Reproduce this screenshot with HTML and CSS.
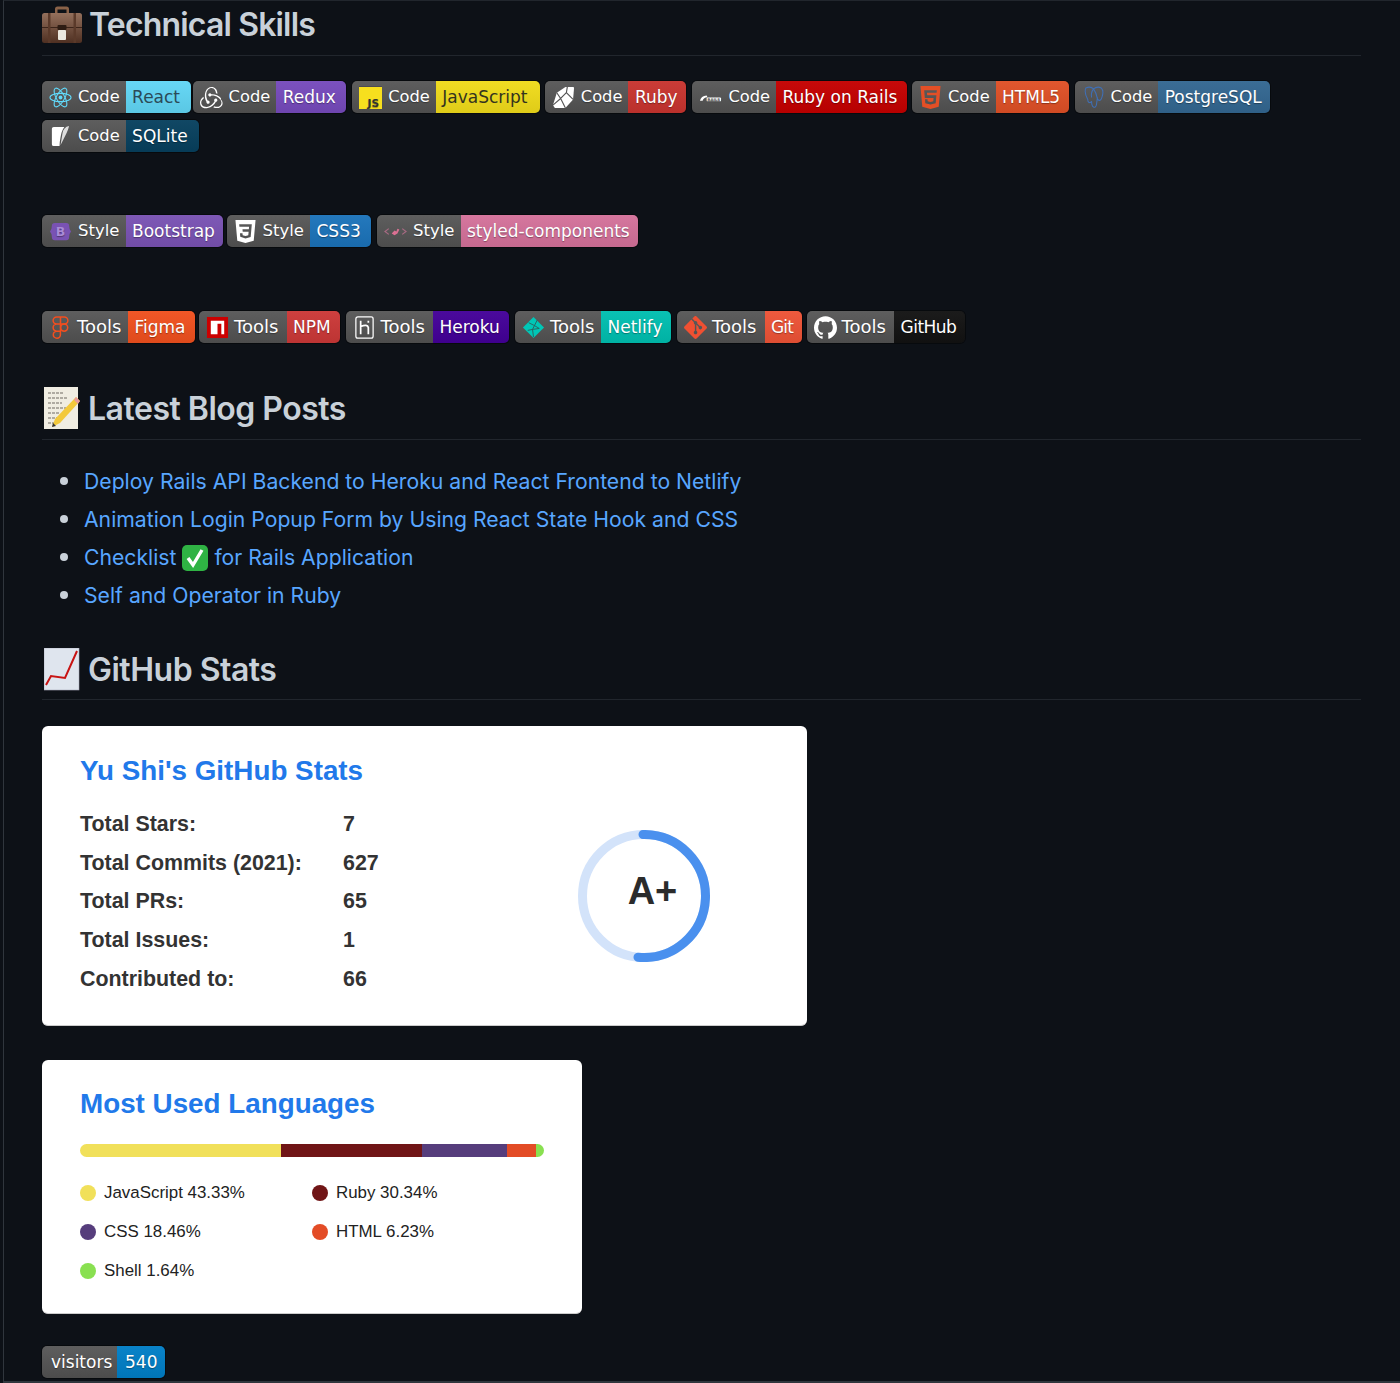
FILE: index.html
```html
<!DOCTYPE html>
<html lang="en">
<head>
  <meta charset="UTF-8">
  <meta name="viewport" content="width=device-width, initial-scale=1.0">
  <title>Technical Skills</title>
  <link rel="stylesheet" href="styles.css">
</head>
<body>
<main class="readme">

  <h2 class="heading first">
    <svg class="emoji" viewBox="0 0 40 37"><defs><linearGradient id="case" x1="0" y1="0" x2="0" y2="1"><stop offset="0" stop-color="#94705c"/><stop offset="1" stop-color="#4f3022"/></linearGradient></defs><path d="M13 8V3q0-2.500 2.500-2.500h9Q27 .5 27 3v5h-2.500V3.500h-9V8z" fill="#8a6248"/><rect x="0" y="7" width="40" height="30" rx="2.500" fill="url(#case)"/><rect x="0" y="21" width="40" height="1" fill="#3c2419"/><rect x="6" y="7" width="2.500" height="30" fill="#5b3a2a"/><rect x="31.500" y="7" width="2.500" height="30" fill="#5b3a2a"/><rect x="15.500" y="19" width="9" height="5" rx="1" fill="#2e1c13"/><rect x="16" y="24" width="8" height="10" rx="1" fill="#ece8df"/></svg>
    Technical Skills
  </h2>

  <div class="badges row-code">
    <span class="badge"><span class="label w-code"><svg class="icon" viewBox="-12 -12 24 24" fill="none" stroke="#61dafb" stroke-width="1.100"><ellipse rx="11" ry="4.300"/><ellipse rx="11" ry="4.300" transform="rotate(60)"/><ellipse rx="11" ry="4.300" transform="rotate(120)"/><circle r="2" fill="#61dafb" stroke="none"/></svg>Code</span><span class="value react">React</span></span>
    <span class="badge tight"><span class="label w-code"><svg class="icon" viewBox="0 0 24 24" fill="#fff"><path d="M16.634 16.504c.87-.075 1.543-.84 1.5-1.754-.047-.914-.796-1.648-1.709-1.648h-.061a1.71 1.71 0 00-1.648 1.769c.03.479.226.869.494 1.153-1.048 2.038-2.621 3.536-5.005 4.795-1.603.838-3.296 1.154-4.944.93-1.378-.195-2.456-.81-3.116-1.799-.988-1.499-1.078-3.116-.24-4.734.6-1.17 1.499-2.023 2.099-2.443a9.96 9.96 0 01-.42-1.543C-.868 14.408-.416 18.752.932 20.805c1.004 1.498 3.057 2.456 5.304 2.456.6 0 1.23-.044 1.843-.194 3.897-.749 6.848-3.086 8.541-6.532zm5.348-3.746c-2.32-2.728-5.738-4.226-9.634-4.226h-.51c-.253-.554-.837-.899-1.498-.899h-.045c-.943 0-1.678.81-1.647 1.753.03.898.794 1.648 1.708 1.648h.06a1.69 1.69 0 001.499-1.049h.54c2.276 0 4.44.66 6.399 1.963 1.498 1.004 2.591 2.303 3.177 3.836.48 1.243.465 2.456-.06 3.505-.81 1.573-2.18 2.411-3.987 2.411-1.15 0-2.276-.36-2.876-.66-.33.3-.93.78-1.334 1.064 1.243.585 2.532.93 3.746.93 2.766 0 4.8-1.543 5.589-3.057.78-1.558.72-4.255-1.527-6.219zM6.661 17.003c.03.899.794 1.648 1.708 1.648h.06a1.688 1.688 0 001.648-1.768c0-.9-.779-1.648-1.693-1.648h-.06c-.06 0-.15 0-.226.03-1.243-2.07-1.768-4.316-1.572-6.744.12-1.828.72-3.417 1.797-4.73.9-1.124 2.592-1.664 3.746-1.693 3.206-.06 4.56 3.94 4.65 5.558.394.09 1.06.3 1.498.45C18.131 3.25 15.214 1 12.21 1 9.4 1 6.78 3.04 5.748 6.04c-1.437 3.995-.51 7.832 1.23 10.858-.15.195-.24.51-.318.81z"/></svg>Code</span><span class="value redux">Redux</span></span>
    <span class="badge wide"><span class="label w-code"><svg class="icon" viewBox="0 0 24 24"><rect width="24" height="24" fill="#f7df1e"/><rect width="24" height="1" fill="#445"/><text x="21" y="21.500" text-anchor="end" class="js-mark">JS</text></svg>Code</span><span class="value js">JavaScript</span></span>
    <span class="badge"><span class="label w-code"><svg class="icon" viewBox="0 0 24 24"><path d="M5 7l9-6h8q1 0 1 1l-1 12-8 9H3l-2-3z" fill="#fff"/><path d="M15 7l7 7M15 7l-6 6 5 10M15 7l1-6M9 13L1 20M5 7l4 6" fill="none" stroke="#555" stroke-width="1.200"/></svg>Code</span><span class="value ruby">Ruby</span></span>
    <span class="badge wide"><span class="label w-code"><svg class="icon" viewBox="0 0 24 24"><path d="M1 15.500q1-5 7-5.500l.8 1.800q-4 .2-5 3.700z" fill="#fff"/><rect x="8" y="12" width="15" height="4" rx="1" fill="#fff"/><text x="15.500" y="15.300" text-anchor="middle" class="rails-mark">RAILS</text></svg>Code</span><span class="value rails">Ruby on Rails</span></span>
    <span class="badge"><span class="label w-code"><svg class="icon" viewBox="0 0 24 24" fill="#e34f26"><path d="M1.500 0h21l-1.910 21.563L11.977 24l-8.564-2.438L1.500 0zm7.031 9.750l-.232-2.718 10.059.003.23-2.622L5.412 4.410l.698 8.010h9.126l-.326 3.426-2.910.804-2.955-.810-.188-2.110H6.248l.33 4.171L12 19.351l5.379-1.443.744-8.157H8.531z"/></svg>Code</span><span class="value html">HTML5</span></span>
    <span class="badge wide"><span class="label w-code"><svg class="icon" viewBox="0 0 24 24" fill="none" stroke="#3f6fb5" stroke-width="1.100"><path d="M4 2q5-2 8 1 4-3 8-1 3 3 1 9-1 4-3 4-1 0-2-2l-1 7q-1 3-3 2-2-1-2-6-1 2-3 1-1-1-1-3-4-7-2-12z"/><path d="M12 3q-3 4-2 9M16 13q-1-6-4-10"/></svg>Code</span><span class="value pg">PostgreSQL</span></span>
    <span class="badge"><span class="label w-code"><svg class="icon" viewBox="0 0 24 24" fill="#fff"><path d="M5 2h11q-3 4-4 11-1 5-1 9H5q-2 0-2-2V4q0-2 2-2z"/><path d="M21 1q-6 1-7 8-1 6-2 12 4-8 6-12 2-4 3-8z" fill="#ddd"/></svg>Code</span><span class="value sqlite">SQLite</span></span>
  </div>

  <div class="badges row-style">
    <span class="badge"><span class="label w-style"><svg class="icon" viewBox="0 0 24 24"><path d="M6 3h12q3 0 3 3 0 4 2 6-2 2-2 6 0 3-3 3H6q-3 0-3-3 0-4-2-6 2-2 2-6 0-3 3-3z" fill="#7952b3"/><text x="12" y="17" text-anchor="middle" class="b-mark">B</text></svg>Style</span><span class="value bootstrap">Bootstrap</span></span>
    <span class="badge snug"><span class="label w-style"><svg class="icon" viewBox="0 0 24 24" fill="#fff"><path d="M1.500 0h21l-1.910 21.563L11.977 24l-8.565-2.438L1.500 0zm17.090 4.413L5.410 4.410l.213 2.622 10.125.002-.255 2.716h-6.640l.24 2.573h6.182l-.366 3.523-2.910.804-2.956-.810-.188-2.110h-2.610l.29 3.855L12 19.288l5.373-1.530L18.590 4.414z"/></svg>Style</span><span class="value css">CSS3</span></span>
    <span class="badge wide"><span class="label w-style"><svg class="icon" viewBox="0 0 24 24"><path d="M5 9l-4 3 4 3M19 9l4 3-4 3" fill="none" stroke="#a86a83" stroke-width="1.300"/><path d="M8 14l3-3 2 1 1-3 2 1-2 4-3 2z" fill="#db7093"/></svg>Style</span><span class="value styled">styled-components</span></span>
  </div>

  <div class="badges row-tools">
    <span class="badge"><span class="label w-tools short"><svg class="icon" viewBox="0 0 24 24" fill="none" stroke="#f24e1e" stroke-width="1.600"><path d="M12 1H8a3.700 3.700 0 000 7.400h4zM12 1h4a3.700 3.700 0 010 7.400h-4zM12 8.400H8a3.700 3.700 0 000 7.400h4zM8 15.800a3.700 3.700 0 103.900 3.600v-3.600z"/><circle cx="15.800" cy="12.100" r="3.700"/></svg>Tools</span><span class="value figma">Figma</span></span>
    <span class="badge snug"><span class="label w-tools"><svg class="icon" viewBox="0 0 24 24"><rect x="1" y="1" width="22" height="22" fill="#cb0000"/><path d="M5 5h14v14h-3V8h-4v11H5z" fill="#fff"/></svg>Tools</span><span class="value npm">NPM</span></span>
    <span class="badge wide"><span class="label w-tools"><svg class="icon" viewBox="0 0 24 24" fill="none" stroke="#fff" stroke-width="1.300"><rect x="3" y="1" width="18" height="22" rx="2"/><path d="M8 5v14M8 11q7-3 8 1v7M16 5v2" stroke-width="1.800"/></svg>Tools</span><span class="value heroku">Heroku</span></span>
    <span class="badge wide"><span class="label w-tools short"><svg class="icon" viewBox="0 0 24 24"><path d="M12 1l11 11-11 11L1 12z" fill="#00c7b7"/><path d="M7 7l6 3 5 3-7 1-5 1M13 10l-2 4 1 8M13 10l3-6" fill="none" stroke="#2c5b59" stroke-width=".9"/></svg>Tools</span><span class="value netlify">Netlify</span></span>
    <span class="badge wide"><span class="label w-tools"><svg class="icon" viewBox="0 0 24 24" fill="#f05032"><path d="M23.546 10.930L13.067.452c-.604-.603-1.582-.603-2.188 0L8.708 2.627l2.760 2.760c.645-.215 1.379-.070 1.889.441.516.515.658 1.258.438 1.900l2.658 2.660c.645-.223 1.387-.078 1.900.435.721.720.721 1.884 0 2.604-.719.719-1.881.719-2.600 0-.539-.541-.674-1.337-.404-1.996L12.860 8.955v6.525c.176.086.342.203.488.348.713.721.713 1.883 0 2.600-.719.721-1.889.721-2.609 0-.719-.719-.719-1.879 0-2.598.182-.180.387-.316.605-.406V8.835c-.217-.091-.424-.222-.6-.401-.545-.545-.676-1.342-.396-2.009L7.636 3.700.450 10.881c-.6.605-.6 1.584 0 2.189l10.480 10.477c.604.604 1.582.604 2.186 0l10.430-10.430c.605-.603.605-1.582 0-2.187"/></svg>Tools</span><span class="value git">Git</span></span>
    <span class="badge"><span class="label w-tools"><svg class="icon" viewBox="0 0 24 24" fill="#fff"><path d="M12 .297c-6.630 0-12 5.373-12 12 0 5.303 3.438 9.800 8.205 11.385.6.113.82-.258.82-.577 0-.285-.010-1.040-.015-2.040-3.338.724-4.042-1.610-4.042-1.610C4.422 18.070 3.633 17.700 3.633 17.700c-1.087-.744.084-.729.084-.729 1.205.084 1.838 1.236 1.838 1.236 1.070 1.835 2.809 1.305 3.495.998.108-.776.417-1.305.76-1.605-2.665-.3-5.466-1.332-5.466-5.930 0-1.310.465-2.380 1.235-3.220-.135-.303-.54-1.523.105-3.176 0 0 1.005-.322 3.300 1.230.96-.267 1.980-.399 3-.405 1.020.006 2.040.138 3 .405 2.280-1.552 3.285-1.230 3.285-1.230.645 1.653.24 2.873.12 3.176.765.840 1.230 1.910 1.230 3.220 0 4.610-2.805 5.625-5.475 5.920.42.36.81 1.096.81 2.220 0 1.605-.015 2.896-.015 3.286 0 .315.21.69.825.57C20.565 22.092 24 17.592 24 12.297c0-6.627-5.373-12-12-12"/></svg>Tools</span><span class="value github">GitHub</span></span>
  </div>

  <h2 class="heading blog">
    <svg class="emoji" viewBox="0 0 36 43"><rect x="0" y="0" width="34" height="42" fill="#f0ede2"/><path d="M4 6h16M4 11h20M4 16h14M4 21h18M4 26h12M4 31h10M4 36h8" stroke="#6f6b62" stroke-width="1.200" stroke-dasharray="3 1"/><path d="M32 10l4 4-20 22-8 4 3-8z" fill="#f3c93b"/><path d="M32 10l4 4-2 3-4-4z" fill="#e89a9a"/><path d="M8 40l1-4 3 3z" fill="#333"/></svg>
    Latest Blog Posts
  </h2>

  <ul class="posts">
    <li><a href="#">Deploy Rails API Backend to Heroku and React Frontend to Netlify</a></li>
    <li><a href="#">Animation Login Popup Form by Using React State Hook and CSS</a></li>
    <li><a href="#">Checklist <svg class="check" viewBox="0 0 26 26"><rect width="26" height="26" rx="5" fill="#2fb344"/><path d="M6 13l5 7 9-15" fill="none" stroke="#fff" stroke-width="3.400"/></svg> for Rails Application</a></li>
    <li><a href="#">Self and Operator in Ruby</a></li>
  </ul>

  <h2 class="heading stats">
    <svg class="emoji" viewBox="0 0 36 43"><rect x="0" y="0" width="35" height="42" fill="#dfe5ee"/><rect x="0" y="0" width="35" height="42" fill="none" stroke="#aab" stroke-width=".6"/><path d="M2 37l5-9 14 2 12-27" fill="none" stroke="#c81414" stroke-width="2"/></svg>
    GitHub Stats
  </h2>

  <section class="card card-stats">
    <div class="stats-body">
      <h3 class="card-title">Yu Shi's GitHub Stats</h3>
      <dl class="stat-list">
        <dt>Total Stars:</dt><dd>7</dd>
        <dt>Total Commits (2021):</dt><dd>627</dd>
        <dt>Total PRs:</dt><dd>65</dd>
        <dt>Total Issues:</dt><dd>1</dd>
        <dt>Contributed to:</dt><dd>66</dd>
      </dl>
    </div>
    <svg class="rank" viewBox="0 0 132 132">
      <circle cx="66" cy="66" r="61.500" fill="none" stroke="#d3e3fa" stroke-width="9"/>
      <path d="M65 4.500A61.500 61.500 0 1 1 60 127.200" fill="none" stroke="#4a90ee" stroke-width="9" stroke-linecap="round"/>
      <text x="74.500" y="73.500" text-anchor="middle" class="rank-text">A+</text>
    </svg>
  </section>

  <section class="card card-langs">
    <h3 class="card-title">Most Used Languages</h3>
    <div class="lang-bar">
      <span class="seg c-js" style="width:43.33%"></span>
      <span class="seg c-ruby" style="width:30.34%"></span>
      <span class="seg c-css" style="width:18.46%"></span>
      <span class="seg c-html" style="width:6.23%"></span>
      <span class="seg c-shell" style="width:1.64%"></span>
    </div>
    <ul class="lang-list">
      <li><i class="dot c-js"></i>JavaScript 43.33%</li>
      <li><i class="dot c-ruby"></i>Ruby 30.34%</li>
      <li><i class="dot c-css"></i>CSS 18.46%</li>
      <li><i class="dot c-html"></i>HTML 6.23%</li>
      <li><i class="dot c-shell"></i>Shell 1.64%</li>
    </ul>
  </section>

  <div class="badges row-visitors">
    <span class="badge"><span class="label w-visitors">visitors</span><span class="value visitors">540</span></span>
  </div>

</main>
</body>
</html>
```

FILE: styles.css
```css
html, body {
  margin: 0;
  padding: 0;
  background-color: #0d1117;
}

.readme {
  box-sizing: border-box;
  height: 1383px;
  overflow: hidden;
  margin-left: 3px;
  padding: 0 39px 0 38px;
  border-left: 1px solid #30363d;
  border-top: 1px solid #21262d;
  border-bottom: 2px solid #30363d;
  font-family: Inter, "Liberation Sans", sans-serif;
  color: #c9d1d9;
}

.heading {
  display: flex;
  align-items: center;
  gap: 8px;
  margin: 0;
  font-size: 32px;
  font-weight: 600;
  letter-spacing: -0.5px;
  color: #c9d1d9;
  border-bottom: 1px solid #21262d;
}

.heading.first {
  height: 55px;
  padding-bottom: 7px;
  box-sizing: border-box;
  gap: 7px;
  letter-spacing: -0.83px;
}

.heading.blog { height: 60px; margin-top: 35.500px; }
.heading.stats { height: 59px; margin-top: 26.500px; }

.emoji {
  width: 40px;
  height: 37px;
  flex: none;
}

.blog .emoji, .stats .emoji {
  width: 36px;
  height: 43px;
  margin-left: 2px;
}

/* shields */
.badges {
  display: flex;
  flex-wrap: wrap;
  gap: 7px 5px;
}

.row-code { margin-top: 25px; }
.row-style { margin-top: 63px; }
.row-tools { margin-top: 64px; }
.row-visitors { margin-top: 32px; }

.tight { margin-left: -3px; }
.snug { margin-left: -1px; }
.wide { margin-left: 1px; }

.badge {
  display: inline-flex;
  height: 32px;
  border-radius: 5px;
  overflow: hidden;
  font-family: "DejaVu Sans", sans-serif;
  font-size: 17px;
  line-height: 32px;
  color: #fff;
  text-shadow: 0 1px 1px rgba(0, 0, 0, 0.35);
  box-shadow: 0 0 0 1px rgba(0, 0, 0, 0.4);
}

.label {
  box-sizing: border-box;
  display: flex;
  align-items: center;
  padding-left: 7px;
  white-space: nowrap;
  background: linear-gradient(#5e5e5e, #4c4c4c);
}

.w-code { width: 83.600px; font-size: 16.300px; }
.w-style { width: 83.500px; font-size: 16.500px; }
.w-tools { width: 87.500px; font-size: 18px; }
.w-tools.short { width: 86px; }
.w-tools .icon { margin-right: 5px; }
.w-visitors { width: 75px; padding-left: 9px; }

.value {
  box-sizing: border-box;
  padding-left: 6.500px;
  white-space: nowrap;
  background-image: linear-gradient(rgba(255, 255, 255, 0.04), rgba(0, 0, 0, 0.07));
}

.icon {
  width: 23px;
  height: 23px;
  margin-right: 6px;
  flex: none;
}

.js-mark { font: bold 11px "DejaVu Sans", sans-serif; fill: #323330; }
.b-mark { font: bold 13px "DejaVu Sans", sans-serif; fill: #a98bd6; }
.rails-mark { font: bold 4px "DejaVu Sans", sans-serif; fill: #555; }

.react { width: 65px; background-color: #61d6f5; color: #2b4a57; text-shadow: none; }
.redux { width: 70px; background-color: #764abc; }
.js { width: 104px; background-color: #f0db1a; color: #33331f; text-shadow: none; }
.ruby { width: 58px; background-color: #c8342f; }
.rails { width: 131px; background-color: #c40000; }
.html { width: 73px; background-color: #df5026; }
.pg { width: 112px; background-color: #336791; }
.sqlite { width: 73px; background-color: #07405e; }
.bootstrap { width: 97px; background-color: #7952b3; }
.css { width: 61px; background-color: #1b73ba; }
.styled { width: 177px; background-color: #d4719a; }
.figma { width: 67px; background-color: #f0501e; }
.npm { width: 53px; background-color: #cb3837; }
.heroku { width: 76px; background-color: #430098; }
.netlify { width: 70px; background-color: #00bfb0; }
.git { width: 37px; background-color: #ee5336; letter-spacing: -0.8px; }
.github { width: 71px; background-color: #121212; letter-spacing: -0.5px; }
.visitors { width: 48px; background-color: #007ec6; padding-left: 8px; }

/* blog list */
.posts {
  margin: 22px 0 0;
  padding: 0 0 0 42px;
  list-style: none;
  font-size: 21.200px;
  line-height: 38px;
}

.posts li {
  position: relative;
}

.posts li::before {
  content: "";
  position: absolute;
  left: -24px;
  top: 15px;
  width: 8px;
  height: 8px;
  border-radius: 50%;
  background: #c9d1d9;
}

.posts a {
  color: #58a6ff;
  text-decoration: none;
}

.check {
  width: 26px;
  height: 26px;
  vertical-align: -6px;
}

/* cards */
.card {
  box-sizing: border-box;
  background-color: #fff;
  border-radius: 6px;
  border-bottom: 1px solid #ccc;
  font-family: "Liberation Sans", Arial, sans-serif;
  color: #222;
}

.card-stats {
  display: flex;
  justify-content: space-between;
  width: 765px;
  height: 300px;
  margin-top: 26px;
  padding: 27px 97px 0 38px;
}

.card-langs {
  width: 540px;
  height: 254px;
  margin-top: 34px;
  padding: 26px 38px 0;
}

.card-title {
  margin: 0;
  font-size: 27.800px;
  line-height: 36px;
  font-weight: 700;
  color: #2179ea;
}

.stat-list {
  display: grid;
  grid-template-columns: 263px auto;
  grid-auto-rows: 38.750px;
  align-items: center;
  margin: 16px 0 0;
  font-size: 21.400px;
  font-weight: 700;
  color: #333;
}

.stat-list dd {
  margin: 0;
}

.rank {
  width: 132px;
  height: 132px;
  margin-top: 77px;
  flex: none;
}

.rank-text {
  font: bold 38px "Liberation Sans", Arial, sans-serif;
  fill: #2b2b2b;
}

.lang-bar {
  display: flex;
  height: 13px;
  width: 464px;
  margin-top: 22px;
  border-radius: 7px;
  overflow: hidden;
}

.seg { display: block; }

.c-js { background: #f1e05a; }
.c-ruby { background: #701516; }
.c-css { background: #563d7c; }
.c-html { background: #e34c26; }
.c-shell { background: #89e051; }

.lang-list {
  display: grid;
  grid-template-columns: 232px auto;
  grid-auto-rows: 38.700px;
  align-items: center;
  margin: 17px 0 0;
  padding: 0;
  list-style: none;
  font-size: 16.900px;
  color: #222;
}

.lang-list li {
  display: flex;
  align-items: center;
  gap: 8px;
}

.dot {
  width: 16px;
  height: 16px;
  border-radius: 50%;
}
```
